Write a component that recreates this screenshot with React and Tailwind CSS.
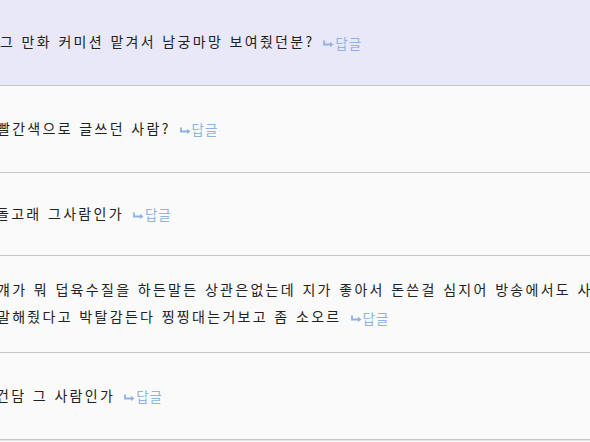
const comments = [
    { lines: ["그 만화 커미션 맡겨서 남궁마망 보여줬던분?"], bg: "bg-[#e8e8f8]", pad: "h-[86px]", indent: "ml-0" },
    { lines: ["빨간색으로 글쓰던 사람?"], bg: "bg-[#fafafa]", pad: "h-[87px]", indent: "-ml-[3px]" },
    { lines: ["돌고래 그사람인가"], bg: "bg-[#fafafa]", pad: "h-[83px]", indent: "-ml-[4px]" },
    {
        lines: [
            "걔가 뭐 덥육수질을 하든말든 상관은없는데 지가 좋아서 돈쓴걸 심지어 방송에서도 사",
            "말해줬다고 박탈감든다 찡찡대는거보고 좀 소오르",
        ],
        bg: "bg-[#fafafa]",
        pad: "h-[97px]",
        indent: "-ml-[3px]",
    },
    { lines: ["건담 그 사람인가"], bg: "bg-[#fafafa]", pad: "h-[87px]", indent: "-ml-[4px]" },
];

function Reply() {
    return (
        <span className="ml-[9px] inline-flex items-center text-[13.5px] tracking-[1px] text-[#8fb2e3] whitespace-nowrap">
            {/* hook arrow */}
            <svg width="11" height="7" viewBox="0 0 11 7" className="mr-[1px] mt-[1px]">
                <path d="M1 0.5 V4.5 H8" stroke="#8fb2e3" strokeWidth="1.8" fill="none" />
                <path d="M7 1.8 L10.5 4.5 L7 7 Z" fill="#8fb2e3" />
            </svg>
            답글
        </span>
    );
}

function Comment({ comment }) {
    const last = comment.lines.length - 1;

    return (
        <div className={`${comment.bg} ${comment.pad} flex flex-col justify-center border-b border-[#c6c6c6] shadow-[0_1px_0_#e4e4e4]`}>
            <div className={`${comment.indent} text-[14px] leading-[27px] tracking-[2.3px] [word-spacing:1px] text-[#222]`}>
                {comment.lines.map((line, i) => (
                    <div key={i} className="whitespace-nowrap">
                        {line}
                        {i === last && <Reply />}
                    </div>
                ))}
            </div>
        </div>
    );
}

export default function App() {
    return (
        <div
            className="w-[590px] h-[442px] overflow-hidden bg-[#fafafa]"
            style={{ fontFamily: '"Noto Sans CJK KR", "Noto Sans", sans-serif' }}
        >
            {comments.map((c, i) => (
                <Comment key={i} comment={c} />
            ))}
        </div>
    );
}
